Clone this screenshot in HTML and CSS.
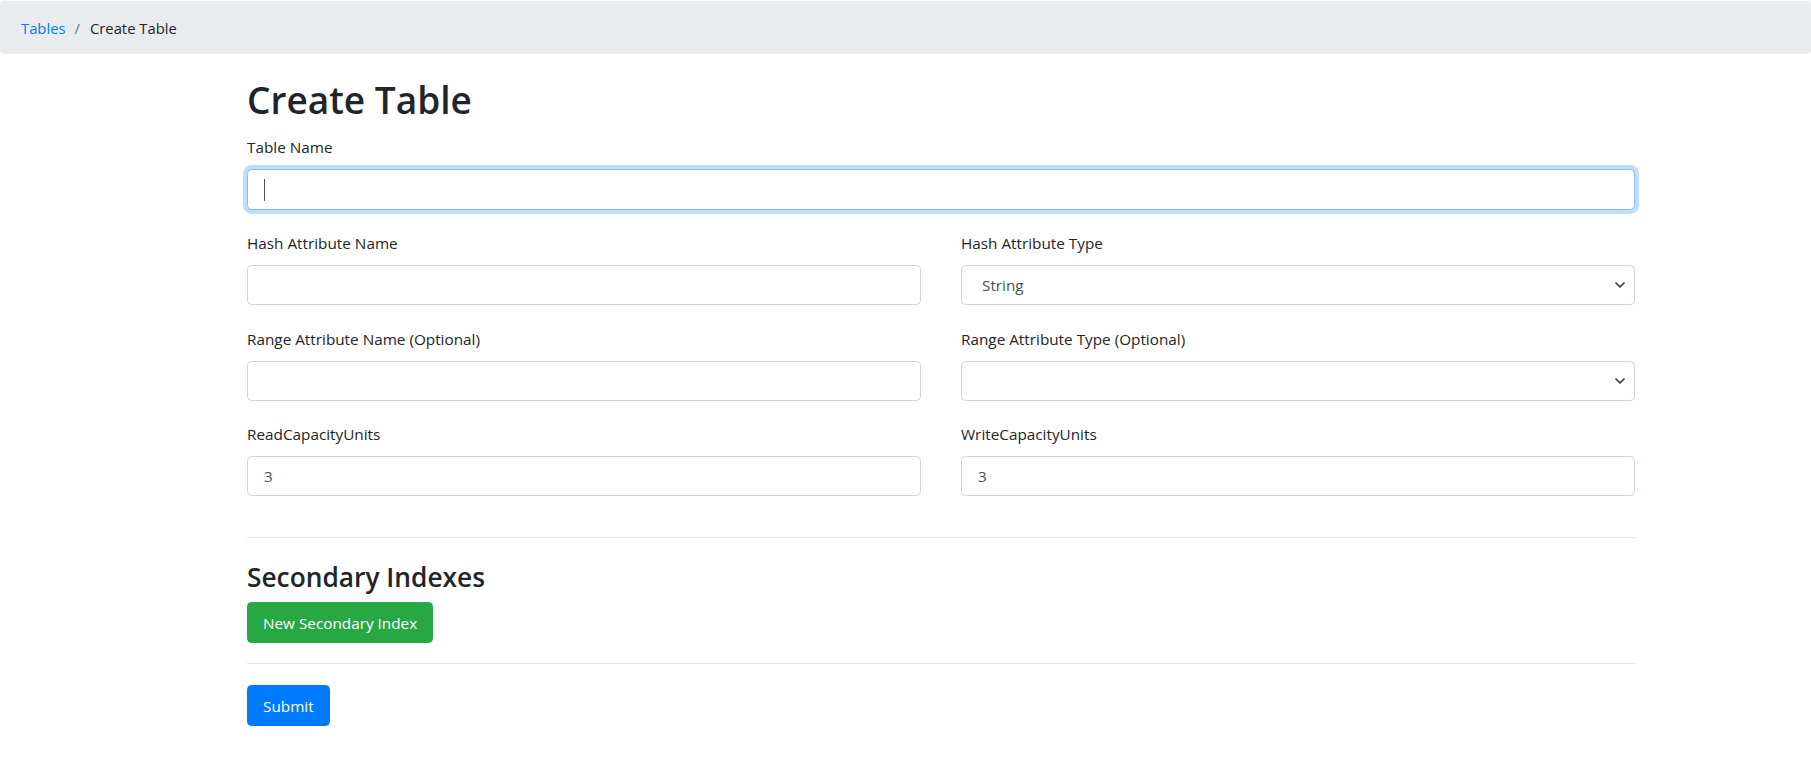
FILE: index.html
```html
<!DOCTYPE html>
<html lang="en">
<head>
<meta charset="utf-8">
<title>Create Table</title>
<link rel="stylesheet" href="styles.css">
</head>
<body>
<nav class="breadcrumb">
  <a class="crumb-link" href="#">Tables</a>
  <span class="crumb-sep">/</span>
  <span class="crumb-active">Create Table</span>
</nav>
<main class="page">
  <h1 class="title">Create Table</h1>
  <form class="form">
    <div class="field field-first">
      <label class="label">Table Name</label>
      <div class="control-wrap">
        <input class="control control-focus" type="text">
        <span class="caret"></span>
      </div>
    </div>
    <div class="grid">
      <div class="field">
        <label class="label">Hash Attribute Name</label>
        <input class="control" type="text">
      </div>
      <div class="field">
        <label class="label">Hash Attribute Type</label>
        <div class="control-wrap">
          <select class="control select"><option>String</option></select>
          <svg class="chevron" width="10" height="6" viewBox="0 0 10 6"><path d="M1 1l4 4 4-4" fill="none" stroke="#343a40" stroke-width="1.7" stroke-linecap="round" stroke-linejoin="round"/></svg>
        </div>
      </div>
      <div class="field">
        <label class="label">Range Attribute Name (Optional)</label>
        <input class="control" type="text">
      </div>
      <div class="field">
        <label class="label">Range Attribute Type (Optional)</label>
        <div class="control-wrap">
          <select class="control select"><option></option></select>
          <svg class="chevron" width="10" height="6" viewBox="0 0 10 6"><path d="M1 1l4 4 4-4" fill="none" stroke="#343a40" stroke-width="1.7" stroke-linecap="round" stroke-linejoin="round"/></svg>
        </div>
      </div>
      <div class="field">
        <label class="label">ReadCapacityUnits</label>
        <input class="control" type="text" value="3">
      </div>
      <div class="field">
        <label class="label">WriteCapacityUnits</label>
        <input class="control" type="text" value="3">
      </div>
    </div>
    <hr class="rule rule-top">
    <h3 class="section-title">Secondary Indexes</h3>
    <div class="actions">
      <button class="btn btn-green" type="button">New Secondary Index</button>
    </div>
    <hr class="rule rule-mid">
    <div class="actions">
      <button class="btn btn-blue" type="button">Submit</button>
    </div>
  </form>
</main>
</body>
</html>
```
FILE: styles.css
```css
* { box-sizing: border-box; }
html, body { margin: 0; padding: 0; background: #fff; }
body {
  font-family: "Open Sans", "Noto Sans", "Liberation Sans", sans-serif;
  font-size: 15.3px;
  line-height: 24px;
  color: #212529;
}
.breadcrumb {
  margin-top: 1px;
  height: 53px;
  display: flex;
  align-items: center;
  padding-left: 21px;
  background: #e9ecef;
  border-radius: 4px;
  font-size: 14.8px;
}
.crumb-link { color: #007bff; text-decoration: none; }
.crumb-sep { color: #6c757d; margin: 0 10px 0 9px; }
.crumb-active { color: #212529; }
.page {
  margin-left: 247px;
  width: 1388px;
}
.title {
  margin: 23px 0 11.5px;
  font-size: 37px;
  line-height: 46px;
  font-weight: 600;
  color: #212529;
}
.form { margin: 0; }
.field-first { margin-bottom: 21.5px; }
.label {
  display: block;
  line-height: 24px;
  margin-bottom: 10px;
}
.grid {
  display: grid;
  grid-template-columns: 1fr 1fr;
  column-gap: 40px;
  row-gap: 21.5px;
}
.control-wrap { position: relative; }
.control {
  display: block;
  width: 100%;
  height: 40px;
  padding: 0 16px;
  font-family: inherit;
  font-size: 15.3px;
  color: #495057;
  background: #fff;
  border: 1px solid #ced4da;
  border-radius: 4.5px;
  outline: none;
}
.control-focus {
  height: 41px;
  border-color: #80bdff;
  box-shadow: 0 0 0 4px rgba(0, 123, 255, 0.25);
}
.caret {
  position: absolute;
  left: 17px;
  top: 10px;
  width: 1px;
  height: 22px;
  background: #495057;
}
.select {
  -webkit-appearance: none;
  appearance: none;
  padding-left: 20px;
}
.chevron {
  position: absolute;
  right: 10px;
  top: 17px;
}
.rule {
  margin: 0;
  border: 0;
  border-top: 1px solid rgba(0, 0, 0, 0.1);
  height: 0;
}
.rule-top { margin-top: 41px; margin-bottom: 22.5px; }
.section-title {
  margin: 0 0 9.5px;
  font-size: 26.3px;
  line-height: 32px;
  font-weight: 600;
  color: #212529;
}
.rule-mid { margin-top: 20px; margin-bottom: 21px; }
.actions { display: flex; }
.btn {
  display: inline-flex;
  align-items: center;
  justify-content: center;
  height: 41px;
  padding: 0 15px;
  font-family: inherit;
  font-size: 15.3px;
  color: #fff;
  border: 1px solid transparent;
  border-radius: 4.5px;
  cursor: pointer;
}
.btn-green { background: #28a745; border-color: #28a745; }
.btn-blue { background: #007bff; border-color: #007bff; }
```
